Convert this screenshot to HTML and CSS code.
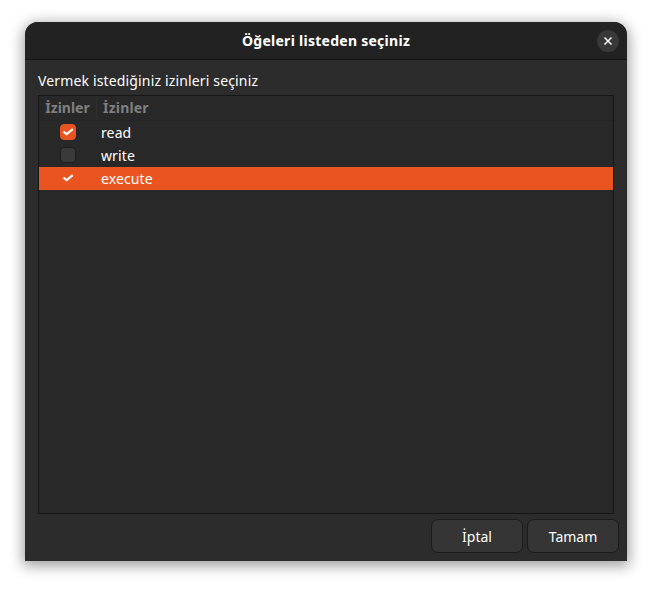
FILE: index.html
```html
<!DOCTYPE html>
<html lang="tr">
<head>
<meta charset="utf-8">
<title>Öğeleri listeden seçiniz</title>
<link rel="stylesheet" href="styles.css">
</head>
<body>
<main class="dialog">
  <header class="titlebar">
    <h1 class="title">Öğeleri listeden seçiniz</h1>
    <button class="close" aria-label="Kapat">
      <svg width="16" height="16" viewBox="0 0 16 16"><path d="M4.5 4.5l7 7M11.5 4.5l-7 7" stroke="#fff" stroke-width="1.5" fill="none"/></svg>
    </button>
  </header>
  <section class="content">
    <p class="prompt">Vermek istediğiniz izinleri seçiniz</p>
    <div class="tree">
      <div class="row head">
        <span class="col-check">İzinler</span>
        <span class="col-name">İzinler</span>
      </div>
      <div class="row">
        <span class="col-check"><span class="box on"><svg width="14" height="14" viewBox="0 0 14 14"><path d="M2.4 6.4l3.2 2.7 6.2-5" stroke="#fff" stroke-width="2" fill="none"/></svg></span></span>
        <span class="col-name">read</span>
      </div>
      <div class="row">
        <span class="col-check"><span class="box"></span></span>
        <span class="col-name">write</span>
      </div>
      <div class="row selected">
        <span class="col-check"><span class="box on"><svg width="14" height="14" viewBox="0 0 14 14"><path d="M2.4 6.4l3.2 2.7 6.2-5" stroke="#fff" stroke-width="2" fill="none"/></svg></span></span>
        <span class="col-name">execute</span>
      </div>
    </div>
    <div class="actions">
      <button class="btn">İptal</button>
      <button class="btn">Tamam</button>
    </div>
  </section>
</main>
</body>
</html>
```
FILE: styles.css
```css
* { box-sizing: border-box; }
html, body { margin: 0; height: 100%; background: #fff; overflow: hidden; }
body { padding: 22px 25px 28px; font-family: "Noto Sans", sans-serif; font-size: 14px; color: #fff; }
.dialog {
  width: 602px; height: 539px; display: flex; flex-direction: column;
  background: #2c2c2c; border-radius: 13px 13px 0 0;
  box-shadow: 0 3px 14px 2px rgba(0,0,0,.38);
}
.titlebar {
  height: 38px; flex: none; display: flex; align-items: center; justify-content: center;
  position: relative; background: #222; border-bottom: 1px solid #161616;
  border-radius: 13px 13px 0 0;
}
.title { margin: 0; font-size: 14px; font-weight: 700; letter-spacing: 0.27px; }
.close {
  position: absolute; right: 8px; top: 8px; width: 22px; height: 22px; padding: 0;
  border: 0; border-radius: 50%; background: #383838;
  display: flex; align-items: center; justify-content: center;
}
.content { flex: 1; display: flex; flex-direction: column; padding: 11px 8px 8px 13px; min-height: 0; }
.prompt { margin: 0 0 4px; height: 20px; line-height: 20px; letter-spacing: 0.15px; }
.tree {
  flex: none; height: 419px; width: 576px; background: #282828; border: 1px solid #161616;
}
.row { display: flex; align-items: center; height: 23px; }
.head { height: 25px; border-bottom: 1px solid #252525; color: #7f7f7f; font-weight: 700; }
.col-check { width: 58px; flex: none; display: flex; justify-content: center; }
.col-name { padding-left: 4px; letter-spacing: 0.12px; }
.head .col-check { border-right: 1px solid #2f2f2f; height: 100%; align-items: center; padding-bottom: 2px; letter-spacing: 0; }
.head .col-name { padding-left: 6px; padding-bottom: 2px; letter-spacing: 0.2px; }
.box {
  width: 16px; height: 16px; margin-bottom: 2px; border-radius: 4px; background: #3a3a3a; border: 1px solid #1c1c1c;
  display: flex; align-items: center; justify-content: center;
}
.box.on { background: #e95420; border-color: #e95420; }
.selected { background: #e95420; }
.actions { display: flex; justify-content: flex-end; gap: 4px; margin-top: 5px; }
.btn {
  width: 92px; height: 34px; border: 1px solid #1b1b1b; border-radius: 7px; background: #353535;
  color: #fff; font: inherit; padding: 0;
}
```
